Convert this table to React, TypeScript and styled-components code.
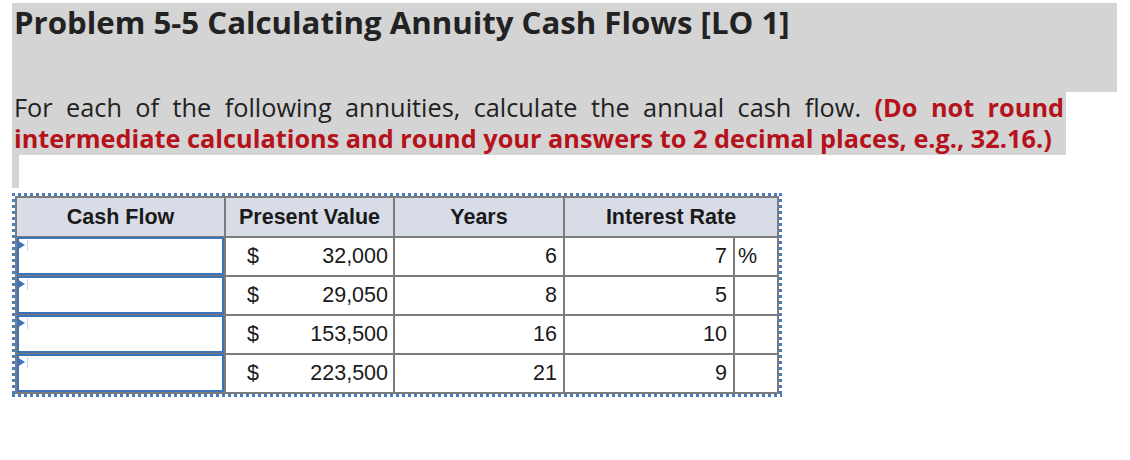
import * as React from 'react';
import styled, { createGlobalStyle } from 'styled-components';

const GlobalStyle = createGlobalStyle`
  html, body {
    margin: 0;
    padding: 0;
    background: #fff;
  }
`;

const Page = styled.div`
  padding: 3px 0 0 12px;
  font-family: 'Open Sans', Lato, sans-serif;
  color: #222;
`;

const TitleBar = styled.div`
  width: 1105px;
  height: 89px;
  background: #d4d4d4;
  box-sizing: border-box;
  padding: 0 0 0 2px;
`;

const Title = styled.h1`
  margin: 0;
  font-size: 31.2px;
  font-weight: 700;
  line-height: 38px;
  color: #222;
`;

const Prompt = styled.div`
  width: 1054px;
  height: 63px;
  background: #d4d4d4;
  box-sizing: border-box;
  padding: 0 2px;
  font-size: 25.3px;
  line-height: 31px;
`;

const Line = styled.div<{ $justify?: boolean }>`
  text-align: ${p => (p.$justify ? 'justify' : 'left')};
  text-align-last: ${p => (p.$justify ? 'justify' : 'auto')};
  white-space: nowrap;
`;

const Strong = styled.span`
  color: #b5121b;
  font-weight: 700;
`;

const Stub = styled.div`
  width: 7px;
  height: 33px;
  background: #d4d4d4;
`;

const dots = '#4a7dc0';

const Frame = styled.div`
  margin-top: 5px;
  width: fit-content;
  padding: 3px;
  background:
    repeating-linear-gradient(90deg, ${dots} 0 3px, transparent 3px 6px) top left / 100% 3px no-repeat,
    repeating-linear-gradient(90deg, ${dots} 0 3px, transparent 3px 6px) bottom left / 100% 3px no-repeat,
    repeating-linear-gradient(180deg, ${dots} 0 3px, transparent 3px 6px) top left / 3px 100% no-repeat,
    repeating-linear-gradient(180deg, ${dots} 0 3px, transparent 3px 6px) top right / 3px 100% no-repeat;
`;

const Grid = styled.div`
  display: grid;
  grid-template-columns: 207px 167px 168px 168px 42px;
  grid-auto-rows: 37px;
  grid-template-rows: 38px;
  gap: 2px;
  padding: 2px;
  background: #7b7b7b;
  font-family: 'Liberation Sans', Arial, sans-serif;
  font-size: 21.5px;
  color: #1a1a1a;
`;

const Head = styled.div<{ $span?: number }>`
  grid-column: span ${p => p.$span || 1};
  background: #d8dce7;
  font-weight: 700;
  display: flex;
  align-items: center;
  justify-content: center;
`;

const Cell = styled.div<{ $align?: 'left' | 'right' }>`
  background: #fff;
  display: flex;
  align-items: center;
  justify-content: ${p => (p.$align === 'left' ? 'flex-start' : 'flex-end')};
  padding: ${p => (p.$align === 'left' ? '0 0 0 3px' : '0 6px 0 0')};
`;

const MoneyCell = styled(Cell)`
  justify-content: space-between;
  padding: 0 5px 0 21px;
`;

const InputBox = styled.div`
  position: relative;
  border: 2px solid #3d72b9;
  background: #fff;
  box-sizing: border-box;
  margin: -1px 0 0 0;
  height: 38px;

  &::before {
    content: '';
    position: absolute;
    left: -2px;
    top: 1px;
    border-top: 5px solid transparent;
    border-bottom: 5px solid transparent;
    border-left: 8px solid #3f74ba;
  }

  &::after {
    content: '';
    position: absolute;
    left: 8px;
    top: 1px;
    width: 1px;
    height: 11px;
    background: #c3d1e6;
  }
`;

const rows = [
  { pv: '32,000', years: 6, rate: 7 },
  { pv: '29,050', years: 8, rate: 5 },
  { pv: '153,500', years: 16, rate: 10 },
  { pv: '223,500', years: 21, rate: 9 }
];

const App: React.FC = () => (
  <Page>
    <GlobalStyle />
    <TitleBar>
      <Title>Problem 5-5 Calculating Annuity Cash Flows [LO 1]</Title>
    </TitleBar>
    <Prompt>
      <Line $justify>
        For each of the following annuities, calculate the annual cash flow.{' '}
        <Strong>(Do not round</Strong>
      </Line>
      <Line>
        <Strong>
          intermediate calculations and round your answers to 2 decimal places, e.g., 32.16.)
        </Strong>
      </Line>
    </Prompt>
    <Stub />
    <Frame>
      <Grid>
        <Head>Cash Flow</Head>
        <Head>Present Value</Head>
        <Head>Years</Head>
        <Head $span={2}>Interest Rate</Head>
        {rows.map((row, index) => (
          <React.Fragment key={index}>
            <InputBox />
            <MoneyCell>
              <span>$</span>
              <span>{row.pv}</span>
            </MoneyCell>
            <Cell>{row.years}</Cell>
            <Cell>{row.rate}</Cell>
            <Cell $align="left">{index === 0 ? '%' : ''}</Cell>
          </React.Fragment>
        ))}
      </Grid>
    </Frame>
  </Page>
);

export default App;
